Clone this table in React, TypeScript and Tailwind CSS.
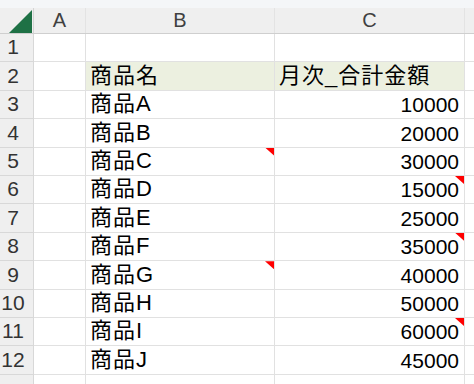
import React from 'react';

// Sheet data - row 2 is the header row of the table
const rows: { b: string; c: string; noteB?: boolean; noteC?: boolean }[] = [
  { b: '', c: '' },
  { b: '商品名', c: '月次_合計金額' },
  { b: '商品A', c: '10000' },
  { b: '商品B', c: '20000' },
  { b: '商品C', c: '30000', noteB: true },
  { b: '商品D', c: '15000', noteC: true },
  { b: '商品E', c: '25000' },
  { b: '商品F', c: '35000', noteC: true },
  { b: '商品G', c: '40000', noteB: true },
  { b: '商品H', c: '50000' },
  { b: '商品I', c: '60000', noteC: true },
  { b: '商品J', c: '45000' },
];

const Note = () => (
  <div className="absolute top-0 right-0 w-[9px] h-[8px] bg-[#ff0000] [clip-path:polygon(0_0,100%_0,100%_100%)]" />
);

const App = () => {
  return (
    <div
      className="w-[474px] h-[384px] overflow-hidden bg-white text-black"
      style={{ fontFamily: '"Liberation Sans", "Noto Sans CJK JP", sans-serif' }}
    >
      <div className="h-[8px] bg-[#f4f6f8]" />

      {/* column headers */}
      <div className="grid grid-cols-[34px_52px_189px_190px_1fr] h-[26px] bg-[#efefef] border-b border-[#cfcfcf] text-[20px] leading-none text-[#404040]">
        <div className="relative border-r border-[#d4d4d4]">
          <svg width="24" height="23" viewBox="0 0 24 23" className="absolute left-[9px] top-[2px]">
            <polygon points="0,23 23,0 23,23" fill="#1e7145" />
          </svg>
        </div>
        <div className="flex items-end justify-center pb-[3px] border-r border-[#e3e3e3]">A</div>
        <div className="flex items-end justify-center pb-[3px] border-r border-[#e3e3e3]">B</div>
        <div className="flex items-end justify-center pb-[3px] border-r border-[#e3e3e3]">C</div>
        <div />
      </div>

      {rows.map((r, i) => (
        <div key={i} className="grid grid-cols-[34px_52px_189px_190px_1fr] h-[28.4px] text-[21px] leading-none">
          <div className="flex items-end justify-center pr-[7px] pb-[4px] bg-[#efefef] border-r border-b border-[#d8d8d8] text-[#333]">
            {i + 1}
          </div>
          <div className="border-r border-b border-[#e1e1e1]" />
          <div
            className={`relative flex items-end pl-[4px] pb-[3px] text-[22px] tracking-[1px] border-r border-b border-[#e1e1e1] ${
              i === 1 ? 'bg-[#ecf0e0]' : ''
            }`}
          >
            {r.b}
            {r.noteB && <Note />}
          </div>
          <div
            className={`relative flex items-end pb-[3px] border-r border-b border-[#e1e1e1] ${
              i === 1 ? 'bg-[#ecf0e0] pl-[4px] text-[22px] tracking-[1px]' : 'justify-end pr-[5px]'
            }`}
          >
            {r.c}
            {r.noteC && <Note />}
          </div>
          <div className="border-b border-[#e1e1e1]" />
        </div>
      ))}

      <div className="grid grid-cols-[34px_52px_189px_190px_1fr] h-[20px]">
        <div className="bg-[#efefef] border-r border-[#d8d8d8]" />
        <div className="border-r border-[#e1e1e1]" />
        <div className="border-r border-[#e1e1e1]" />
        <div className="border-r border-[#e1e1e1]" />
        <div />
      </div>
    </div>
  );
};

export default App;
